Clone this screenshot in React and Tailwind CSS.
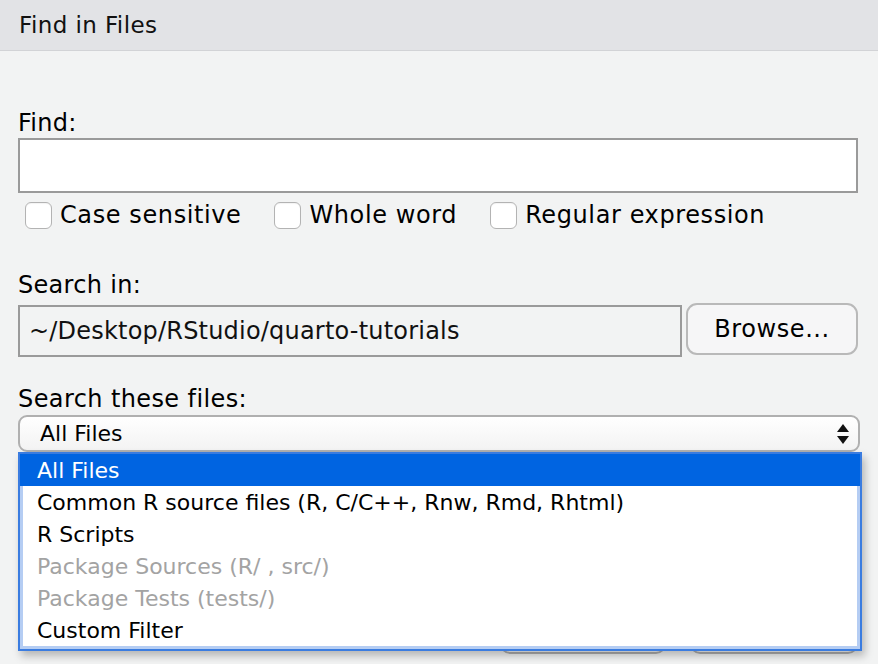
import React from "react";

const font = { fontFamily: '"DejaVu Sans", "Noto Sans", sans-serif' };

function Checkbox({ label }) {
  return (
    <label className="flex items-center gap-[8px]">
      <span className="w-[27px] h-[27px] rounded-[6px] border border-[#b3b3b3] bg-white shadow-[inset_0_1px_1px_rgba(0,0,0,0.05)]" />
      <span className="text-[24px] leading-[28px] tracking-[0.6px] text-black">{label}</span>
    </label>
  );
}

export default function App() {
  const items = [
    { t: "All Files", sel: true },
    { t: "Common R source files (R, C/C++, Rnw, Rmd, Rhtml)" },
    { t: "R Scripts" },
    { t: "Package Sources (R/ , src/)", dis: true },
    { t: "Package Tests (tests/)", dis: true },
    { t: "Custom Filter" },
  ];
  return (
    <div className="w-[878px] h-[664px] bg-[#f2f3f3] overflow-hidden flex flex-col" style={font}>
      <div className="h-[51px] bg-[#e2e3e6] border-b border-[#d2d3d6] flex items-center px-[19px]">
        <span className="text-[23px] tracking-[0.4px] text-[#111] leading-none">Find in Files</span>
      </div>
      <div className="flex flex-col px-[18px]">
        <div className="mt-[58px] text-[24px] leading-[28px] tracking-[0.3px] text-black">Find:</div>
        <div className="mt-[1px] h-[55px] w-[840px] bg-white border-2 border-[#9a9a9a]" />
        <div className="mt-[8px] flex items-center pl-[7px] gap-[33px] h-[28px]">
          <Checkbox label="Case sensitive" />
          <Checkbox label="Whole word" />
          <Checkbox label="Regular expression" />
        </div>
        <div className="mt-[42px] text-[24px] leading-[28px] tracking-[0.3px] text-black">Search in:</div>
        <div className="mt-[4px] flex items-start gap-[4px]">
          <div className="mt-[2px] w-[664px] h-[52px] border-2 border-[#9a9a9a] bg-[#f2f3f3] flex items-center pl-[9px]">
            <span className="text-[24px] tracking-[0.2px] text-[#111]">~/Desktop/RStudio/quarto-tutorials</span>
          </div>
          <button className="w-[172px] h-[52px] rounded-[11px] border-2 border-[#b9b9b9] bg-[#f6f6f7] text-[24px] tracking-[0.6px] text-black flex items-center justify-center">
            Browse...
          </button>
        </div>
        <div className="mt-[28px] text-[24px] leading-[28px] tracking-[0.4px] text-black">Search these files:</div>
        <div className="relative mt-[2px] w-[842px]">
          <div className="h-[37px] rounded-[9px] border-2 border-[#b0b0b0] bg-gradient-to-b from-white to-[#f3f3f3] flex items-center pl-[20px] pr-[8px]">
            <span className="text-[22px] text-black flex-1">All Files</span>
            <svg width="14" height="22" viewBox="0 0 14 22">
              <polygon points="7,1 13,9 1,9" fill="#111" />
              <polygon points="1,13 13,13 7,21" fill="#111" />
            </svg>
          </div>
          <div className="absolute left-0 top-full w-[844px] border-2 border-[#3a7ce0] bg-white shadow-[3px_5px_8px_rgba(0,0,0,0.25)] z-10">
            {items.map((it, i) => (
              <div
                key={i}
                className={
                  it.sel
                    ? "h-[32px] bg-[#0064e1] text-white flex items-center pl-[17px] text-[22px]"
                    : "h-[32px] flex items-center pl-[14px] border-x-[3px] border-[#b5cdf3] text-[22px] " +
                      (it.dis ? "text-[#a3a3a3]" : "text-black")
                }
              >
                {it.t}
              </div>
            ))}
            <div className="h-[3px] bg-[#b5cdf3]" />
          </div>
        </div>
        <div className="mt-[158px] flex justify-end gap-[24px] pr-[2px]">
          <button className="w-[166px] h-[44px] rounded-[10px] border-2 border-[#b0b0b0] bg-[#f6f6f7]" />
          <button className="w-[168px] h-[44px] rounded-[10px] border-2 border-[#b0b0b0] bg-[#f6f6f7]" />
        </div>
      </div>
    </div>
  );
}
